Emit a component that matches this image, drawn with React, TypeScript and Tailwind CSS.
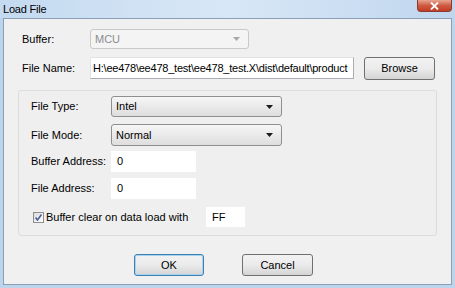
import { useState } from 'react'

function Combo({ value, disabled, className }: { value: string; disabled?: boolean; className: string }) {
  return (
    <div
      className={`flex items-center justify-between rounded-[3px] border pl-1 pr-2 ${
        disabled
          ? 'border-[#c9c9c9] bg-[#f4f4f4] text-[#8d8d8d]'
          : 'border-[#8e8f8f] bg-gradient-to-b from-[#f6f6f6] to-[#dedede] text-black'
      } ${className}`}
    >
      <span>{value}</span>
      <svg width="7" height="4" viewBox="0 0 7 4">
        <path d="M0 0h7L3.5 4z" fill={disabled ? '#a8a8a8' : '#1b1b1b'} />
      </svg>
    </div>
  )
}

function Field({ value, className }: { value: string; className: string }) {
  return (
    <div className={`flex items-center bg-white pl-[6px] ${className}`}>
      {value}
    </div>
  )
}

function Btn({ label, focused, className }: { label: string; focused?: boolean; className: string }) {
  return (
    <button
      className={`flex items-center justify-center rounded-[3px] border bg-gradient-to-b from-[#f2f2f2] via-[#ebebeb] to-[#d4d4d4] text-black ${
        focused ? 'border-[#3c7fb1] shadow-[inset_0_0_0_1px_#a6d4ef]' : 'border-[#707070]'
      } ${className}`}
    >
      {label}
    </button>
  )
}

export default function App() {
  const [clear, setClear] = useState(true)

  return (
    <div
      className="w-[455px] h-[288px] flex flex-col bg-[#bcd4ec] text-[11px] text-black whitespace-nowrap"
      style={{ fontFamily: '"Liberation Sans", Arial, sans-serif' }}
    >
      {/* Title bar */}
      <div className="h-[18px] flex items-start justify-between bg-gradient-to-r from-[#c4daf0] via-[#d8e7f6] to-[#c0d6ee]">
        <span className="pl-[3px] pt-[2px] leading-[14px] tracking-[-0.2px]">Load File</span>
        <div className="mr-[3px] w-[35px] h-[12px] rounded-b-[4px] border border-t-0 border-[#8a3a30] bg-gradient-to-b from-[#e8a593] via-[#cf5a42] to-[#c23d23] flex items-center justify-center">
          <svg width="9" height="8" viewBox="0 0 9 8">
            <path d="M1 0.5L8 7.5M8 0.5L1 7.5" stroke="#fff" strokeWidth="1.8" />
          </svg>
        </div>
      </div>

      {/* Client */}
      <div className="flex-1 mx-[3px] mb-[3px] border border-[#8aa0b8] bg-[#f0f0f0] flex flex-col">
        <div className="flex items-center h-[20px] mt-[10px]">
          <span className="w-[86px] shrink-0 pl-[18px]">Buffer:</span>
          <Combo value="MCU" disabled className="w-[159px] h-[20px]" />
        </div>

        <div className="flex items-center h-[22px] mt-[8px]">
          <span className="w-[86px] shrink-0 pl-[18px]">File Name:</span>
          <Field
            value="H:\ee478\ee478_test\ee478_test.X\dist\default\product"
            className="w-[264px] h-[22px] !pl-[2px] tracking-[-0.22px] overflow-hidden border border-[#abadb3] border-t-[#e3e3e3] border-l-[#e2e3ea]"
          />
          <Btn label="Browse" className="ml-[10px] w-[71px] h-[23px]" />
        </div>

        <div className="mx-[14px] mt-[11px] h-[146px] rounded-[3px] border border-[#dcdcdc] bg-[#efefef] pl-[12px] pt-[5px] flex flex-col">
          <div className="flex items-center h-[21px]">
            <span className="w-[80px] shrink-0">File Type:</span>
            <Combo value="Intel" className="w-[171px] h-[21px]" />
          </div>
          <div className="flex items-center h-[22px] mt-[7px]">
            <span className="w-[80px] shrink-0">File Mode:</span>
            <Combo value="Normal" className="w-[171px] h-[22px]" />
          </div>
          <div className="flex items-center h-[21px] mt-[5px]">
            <span className="w-[80px] shrink-0">Buffer Address:</span>
            <Field value="0" className="w-[85px] h-[21px]" />
          </div>
          <div className="flex items-center h-[21px] mt-[6px]">
            <span className="w-[80px] shrink-0">File Address:</span>
            <Field value="0" className="w-[85px] h-[21px]" />
          </div>
          <div className="flex items-center h-[20px] mt-[8px]">
            <label className="flex items-center w-[175px] shrink-0 pl-[2px]">
              <span
                onClick={() => setClear(!clear)}
                className="w-[11px] h-[11px] border border-[#8f8f8f] bg-gradient-to-br from-[#dcdcdc] to-white flex items-center justify-center mr-[2px]"
              >
                {clear && (
                  <svg width="9" height="9" viewBox="0 0 9 9">
                    <path d="M1.5 4.5L3.5 7L7.5 1.5" stroke="#4a5f97" strokeWidth="1.6" fill="none" />
                  </svg>
                )}
              </span>
              Buffer clear on data load with
            </label>
            <Field value="FF" className="w-[39px] h-[20px]" />
          </div>
        </div>

        <div className="flex justify-center gap-[38px] mt-[18px] pr-[8px]">
          <Btn label="OK" focused className="w-[70px] h-[22px]" />
          <Btn label="Cancel" className="w-[71px] h-[22px]" />
        </div>
      </div>
    </div>
  )
}
